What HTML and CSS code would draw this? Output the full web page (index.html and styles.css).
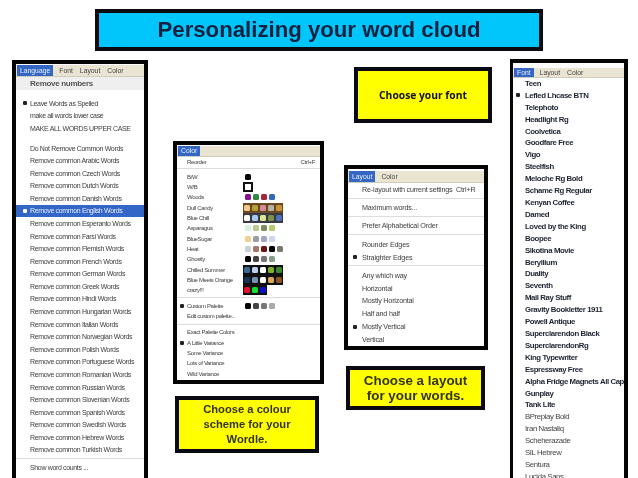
FILE: index.html
```html
<!DOCTYPE html>
<html lang="en">
<head>
<meta charset="utf-8">
<title>Personalizing your word cloud</title>
<link rel="stylesheet" href="styles.css">
</head>
<body>
<main class="slide">
  <h1 class="title">Personalizing your word cloud</h1>

  <section class="win win-lang">
    <div class="tabs"><span class="tab active">Language</span><span class="tab">Font</span><span class="tab">Layout</span><span class="tab">Color</span></div>
    <div class="menu">
      <div class="row head">Remove numbers</div>
      <div class="group">
        <div class="row on">Leave Words as Spelled</div>
        <div class="row">make all words lower case</div>
        <div class="row">MAKE ALL WORDS UPPER CASE</div>
      </div>
      <div class="group">
        <div class="row">Do Not Remove Common Words</div>
        <div class="row">Remove common Arabic Words</div>
        <div class="row">Remove common Czech Words</div>
        <div class="row">Remove common Dutch Words</div>
        <div class="row">Remove common Danish Words</div>
        <div class="row on selected">Remove common English Words</div>
        <div class="row">Remove common Esperanto Words</div>
        <div class="row">Remove common Farsi Words</div>
        <div class="row">Remove common Flemish Words</div>
        <div class="row">Remove common French Words</div>
        <div class="row">Remove common German Words</div>
        <div class="row">Remove common Greek Words</div>
        <div class="row">Remove common Hindi Words</div>
        <div class="row">Remove common Hungarian Words</div>
        <div class="row">Remove common Italian Words</div>
        <div class="row">Remove common Norwegian Words</div>
        <div class="row">Remove common Polish Words</div>
        <div class="row">Remove common Portuguese Words</div>
        <div class="row">Remove common Romanian Words</div>
        <div class="row">Remove common Russian Words</div>
        <div class="row">Remove common Slovenian Words</div>
        <div class="row">Remove common Spanish Words</div>
        <div class="row">Remove common Swedish Words</div>
        <div class="row">Remove common Hebrew Words</div>
        <div class="row">Remove common Turkish Words</div>
      </div>
      <div class="group ruled">
        <div class="row">Show word counts ...</div>
      </div>
    </div>
  </section>

  <section class="win win-color">
    <div class="tabs"><span class="tab active">Color</span></div>
    <div class="menu">
      <div class="row split"><span>Reorder</span><span>Ctrl+F</span></div>
      <div class="group ruled first">
        <div class="row pal"><span>B/W</span><span class="sw"><i class="k"></i></span></div>
        <div class="row pal"><span>W/B</span><span class="sw framed"><i class="w"></i></span></div>
        <div class="row pal"><span>Woods</span><span class="sw"><i class="a1"></i><i class="a2"></i><i class="a3"></i><i class="a4"></i></span></div>
        <div class="row pal"><span>Dull Candy</span><span class="sw boxed brown"><i class="b1"></i><i class="b2"></i><i class="b3"></i><i class="b4"></i><i class="b5"></i></span></div>
        <div class="row pal"><span>Blue Chill</span><span class="sw boxed dark"><i class="w"></i><i class="c2"></i><i class="c3"></i><i class="c4"></i><i class="c5"></i></span></div>
        <div class="row pal"><span>Asparagus</span><span class="sw"><i class="d1"></i><i class="d2"></i><i class="d3"></i><i class="d4"></i></span></div>
        <div class="row pal"><span>BlueSugar</span><span class="sw"><i class="e1"></i><i class="e2"></i><i class="e3"></i><i class="e4"></i></span></div>
        <div class="row pal"><span>Heat</span><span class="sw"><i class="f1"></i><i class="f2"></i><i class="f3"></i><i class="k"></i><i class="f5"></i></span></div>
        <div class="row pal"><span>Ghostly</span><span class="sw"><i class="k"></i><i class="g2"></i><i class="g3"></i><i class="g4"></i></span></div>
        <div class="row pal"><span>Chilled Summer</span><span class="sw boxed black"><i class="h1"></i><i class="h2"></i><i class="w"></i><i class="h4"></i><i class="h5"></i></span></div>
        <div class="row pal"><span>Blue Meets Orange</span><span class="sw boxed black"><i class="j1"></i><i class="j2"></i><i class="w"></i><i class="j4"></i><i class="j5"></i></span></div>
        <div class="row pal"><span>crazy!!!</span><span class="sw boxed black"><i class="red"></i><i class="green"></i><i class="blue"></i></span></div>
      </div>
      <div class="group ruled">
        <div class="row pal on"><span>Custom Palette</span><span class="sw"><i class="k"></i><i class="g2"></i><i class="g3"></i><i class="g5"></i></span></div>
        <div class="row">Edit custom palette...</div>
      </div>
      <div class="group ruled">
        <div class="row">Exact Palette Colors</div>
        <div class="row on">A Little Variance</div>
        <div class="row">Some Variance</div>
        <div class="row">Lots of Variance</div>
        <div class="row">Wild Variance</div>
      </div>
    </div>
  </section>

  <section class="win win-layout">
    <div class="tabs"><span class="tab active">Layout</span><span class="tab">Color</span></div>
    <div class="menu">
      <div class="row">Re-layout with current settings&nbsp; Ctrl+R</div>
      <div class="group ruled"><div class="row">Maximum words...</div></div>
      <div class="group ruled"><div class="row">Prefer Alphabetical Order</div></div>
      <div class="group ruled">
        <div class="row">Rounder Edges</div>
        <div class="row on">Straighter Edges</div>
      </div>
      <div class="group ruled">
        <div class="row">Any which way</div>
        <div class="row">Horizontal</div>
        <div class="row">Mostly Horizontal</div>
        <div class="row">Half and half</div>
        <div class="row on">Mostly Vertical</div>
        <div class="row">Vertical</div>
      </div>
    </div>
  </section>

  <section class="win win-font">
    <div class="tabs"><span class="tab active">Font</span><span class="tab">Layout</span><span class="tab">Color</span></div>
    <div class="menu">
      <div class="row">Teen</div>
      <div class="row on">Lefled Lhcase BTN</div>
      <div class="row">Telephoto</div>
      <div class="row">Headlight Rg</div>
      <div class="row">Coolvetica</div>
      <div class="row">Goodfare Free</div>
      <div class="row">Vigo</div>
      <div class="row">Steelfish</div>
      <div class="row">Meloche Rg Bold</div>
      <div class="row">Schame Rg Regular</div>
      <div class="row">Kenyan Coffee</div>
      <div class="row">Damed</div>
      <div class="row">Loved by the King</div>
      <div class="row">Boopee</div>
      <div class="row">Sikotina Movie</div>
      <div class="row">Beryllium</div>
      <div class="row">Duality</div>
      <div class="row">Seventh</div>
      <div class="row">Mail Ray Stuff</div>
      <div class="row">Gravity Bookletter 1911</div>
      <div class="row">Powell Antique</div>
      <div class="row">Superclarendon Black</div>
      <div class="row">SuperclarendonRg</div>
      <div class="row">King Typewriter</div>
      <div class="row">Espressway Free</div>
      <div class="row">Alpha Fridge Magnets All Cap</div>
      <div class="row">Gunplay</div>
      <div class="row">Tank Lite</div>
      <div class="row light">BPreplay Bold</div>
      <div class="row light">Iran Nastaliq</div>
      <div class="row light">Scheherazade</div>
      <div class="row light">SIL Hebrew</div>
      <div class="row light">Sentura</div>
      <div class="row light">Lucida Sans</div>
    </div>
  </section>

  <p class="note note-font">Choose your font</p>
  <p class="note note-layout">Choose a layout for your words.</p>
  <p class="note note-color">Choose a colour scheme for your Wordle.</p>
</main>
</body>
</html>
```
FILE: styles.css
```css
* { box-sizing: border-box; }
html, body { margin: 0; padding: 0; background: #fff; }
body { width: 638px; height: 478px; overflow: hidden; }

.slide {
  position: relative;
  width: 638px;
  height: 478px;
  overflow: hidden;
  font-family: "Liberation Sans", Arial, sans-serif;
}

.title {
  position: absolute;
  left: 95px; top: 9px;
  width: 448px; height: 42px;
  margin: 0;
  display: flex; align-items: center; justify-content: center;
  background: #00c6fb;
  border: 4px solid #0b0b10;
  color: #12203f;
  font-size: 22.2px;
  font-weight: 700;
  filter: blur(.4px);
}

.win {
  position: absolute;
  background: #fff;
  border: 4px solid #050505;
  overflow: hidden;
  color: #3c3c3c;
}
.win > * { filter: blur(.45px); }

.win-lang { left: 12px; top: 60px; width: 136px; height: 430px; --rh: 12.58px; --gap: 7px; --fs: 7px; --ls: -.35px; --dot: 9px; --col: 14px; }
.win-color { left: 173px; top: 141px; width: 151px; height: 243px; --rh: 10.35px; --gap: 0; --fs: 6px; --ls: -.35px; --dot: 5px; --col: 10px; }
.win-layout { left: 344px; top: 165px; width: 144px; height: 185px; --rh: 12.8px; --gap: 5px; --fs: 7.2px; --ls: -.2px; --dot: 7px; --col: 14px; }
.win-font { left: 510px; top: 59px; width: 118px; height: 430px; border-left-width: 3px; --rh: 11.92px; --gap: 0; --fs: 7.8px; --ls: -.4px; --dot: 5px; --col: 12px; }

.tabs {
  display: flex;
  height: 13px;
  gap: 7px;
  padding-left: 1px;
  background: #e9e5d2;
  border-bottom: 1px solid #cfcdbd;
  font-size: 6.8px;
  line-height: 12px;
  color: #444;
}
.tab.active { padding: 0 3px; margin-right: -1px; background: #3467c4; color: #e8eefa; }

.menu { font-size: var(--fs); letter-spacing: var(--ls); }
.row {
  display: flex;
  align-items: center;
  height: var(--rh);
  white-space: nowrap;
}
.row::before {
  content: "";
  flex: 0 0 var(--col);
  height: 6px;
}
.row.on::before {
  background: radial-gradient(circle at var(--dot) 3px, #222 2px, transparent 2.4px);
}
.group { margin-top: var(--gap); }
.group.ruled { border-top: 1px solid #dcdcdc; margin-top: 2px; padding-top: 2.5px; }

.win-lang .row.head { height: 13px; background: #efefef; font-weight: 700; font-size: 8px; letter-spacing: -.3px; color: #555; }
.win-lang .tabs { margin-top: 1px; height: 12px; }
.row.selected { background: #3366c6; color: #e6ecf8; }
.row.selected::before { background: radial-gradient(circle at var(--dot) 3px, #fff 2px, transparent 2.4px); }

.win-color .tabs { height: 11px; margin-top: 1px; line-height: 10px; }
.win-color .group.first { margin-top: 1px; padding-top: 2px; }
.split { padding-right: 5px; }
.split span:first-child { flex: 1; }
.pal > span:first-child { flex: 0 0 57px; }

.sw { display: flex; gap: 2px; align-items: center; height: 10px; margin-left: 1px; }
.sw i { display: block; width: 6px; height: 6px; border-radius: 1.5px; }
.sw.framed { border: 2px solid #111; padding: 0; margin-left: -1px; }
.sw.boxed { padding: 1px; margin-left: -1px; }
.brown { background: #6b4a22; }
.dark { background: #3a3a44; }
.black { background: #111; }
.k { background: #000; }
.w { background: #fff; }
.a1 { background: #8a1090; } .a2 { background: #2f8a45; } .a3 { background: #a3263a; } .a4 { background: #3168b8; }
.b1 { background: #f3c88e; } .b2 { background: #b8a038; } .b3 { background: #d68a9c; } .b4 { background: #b8b5a3; } .b5 { background: #cc9438; }
.c2 { background: #a9c8ef; } .c3 { background: #dbe88f; } .c4 { background: #7f9148; } .c5 { background: #4d6fbd; }
.d1 { background: #d8f0e0; } .d2 { background: #bcc88c; } .d3 { background: #7c8a5c; } .d4 { background: #b8c86c; }
.e1 { background: #f4cf90; } .e2 { background: #9c9ca6; } .e3 { background: #a7a4c8; } .e4 { background: #cdd6f2; }
.f1 { background: #c8d2d6; } .f2 { background: #a87868; } .f3 { background: #6a1616; } .f5 { background: #7c7870; }
.g2 { background: #444; } .g3 { background: #777; } .g4 { background: #86a088; } .g5 { background: #aaa; }
.h1 { background: #3c6a94; } .h2 { background: #b8d0e8; } .h4 { background: #80b030; } .h5 { background: #3c8830; }
.j1 { background: #17355c; } .j2 { background: #6f93b0; } .j4 { background: #d8a858; } .j5 { background: #8c5420; }
.red { background: #e8102c; } .green { background: #10e030; } .blue { background: #1010c8; }

.win-layout .tabs { height: 12px; margin-top: 2px; }
.win-font { color: #1d2330; font-weight: 700; }
.win-font .tabs { height: 10px; margin-top: 4.5px; line-height: 10px; font-weight: 400; }
.win-font .light { font-weight: 400; color: #444; }

.note {
  position: absolute;
  margin: 0;
  display: flex; align-items: center; justify-content: center;
  text-align: center;
  background: #ffff00;
  border: 4px solid #0a0a14;
  font-weight: 700;
  color: #33331a;
  line-height: 15px;
  filter: blur(.3px);
}
.note-font { left: 354px; top: 67px; width: 138px; height: 56px; font-family: "Open Sans", sans-serif; font-size: 10.3px; color: #111; }
.note-layout { left: 346px; top: 366px; width: 139px; height: 44px; padding: 0 8px; font-size: 13.4px; }
.note-color { left: 175px; top: 396px; width: 144px; height: 57px; padding: 0 16px; font-size: 11.2px; }
```
